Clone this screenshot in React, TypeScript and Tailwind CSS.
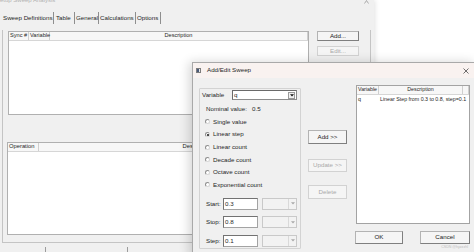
import type { ReactNode } from "react";

function Btn({
  label,
  disabled,
  className,
}: {
  label: string;
  disabled?: boolean;
  className: string;
}) {
  return (
    <div
      className={`flex items-center justify-center border bg-[#f5f5f5] whitespace-nowrap ${
        disabled
          ? "border-[#d2d2d2] text-[#a9a9a9]"
          : "border-[#b3b3b3] border-b-[#7f7f7f] border-r-[#7f7f7f] text-[#222]"
      } ${className}`}
    >
      {label}
    </div>
  );
}

function Arrow({ color }: { color: string }) {
  return (
    <svg width="4" height="3" viewBox="0 0 4 3" aria-hidden="true">
      <path d="M0 0.3h4L2 2.6z" fill={color} />
    </svg>
  );
}

function Combo({ value }: { value: string }) {
  return (
    <div className="flex h-[10px] w-[65px] items-center border border-[#8c8c8c] border-l-[#6a6a6a] border-t-[#6a6a6a] bg-white">
      <span className="flex-1 pl-[1px]">{value}</span>
      <div className="mr-[1px] flex h-[7px] w-[7px] items-center justify-center border border-[#9a9a9a] bg-[#f0f0f0]">
        <Arrow color="#111" />
      </div>
    </div>
  );
}

function Field({ label, value, first }: { label: string; value: string; first?: boolean }) {
  return (
    <div className={`flex h-[12px] items-center pl-[6px] ${first ? "mt-[6.7px]" : "mt-[6.5px]"}`}>
      <span className="w-[17px]">{label}</span>
      <div className="flex h-full w-[35px] items-center border border-[#a3a3a3] border-l-[#727272] border-t-[#727272] bg-white pl-[1px]">
        {value}
      </div>
      <div className="ml-[4px] flex h-full w-[35px] justify-end border border-[#c9c9c9] bg-[#f2f2f2]">
        <div className="flex w-[8px] items-center justify-center border-l border-[#d9d9d9]">
          <Arrow color="#a8a8a8" />
        </div>
      </div>
    </div>
  );
}

function Radio({ label, checked }: { label: string; checked?: boolean }) {
  return (
    <div className="flex h-[12.6px] items-center pl-[5px]">
      <div className="flex h-[5px] w-[5px] items-center justify-center rounded-full border border-[#8d8d8d] border-r-[#d6d6d6] border-b-[#d6d6d6] bg-white">
        {checked && <div className="h-[2px] w-[2px] rounded-full bg-[#111]" />}
      </div>
      <span className="ml-[3px]">{label}</span>
    </div>
  );
}

function HeadCell({ children, className }: { children?: ReactNode; className: string }) {
  return (
    <div className={`flex items-center border-r border-[#cfcfcf] whitespace-nowrap ${className}`}>
      {children}
    </div>
  );
}

function MainWindow() {
  const tabs = [
    { name: "Sweep Definitions", w: "w-[52px] pl-[1px]" },
    { name: "Table", w: "w-[21px] pl-[2px]" },
    { name: "General", w: "w-[24px] pl-[1px]" },
    { name: "Calculations", w: "w-[37px] pl-[1px]" },
    { name: "Options", w: "w-[25px] pl-[1px]" },
  ];

  return (
    <div className="flex h-[252px] w-[374px] flex-col bg-[#f0f0f0] shadow-[1px_0_5px_rgba(0,0,0,0.12)]">
      <div className="flex h-[10px] items-start justify-between overflow-hidden">
        <span className="-ml-[4px] -mt-[3px] text-[6px] whitespace-nowrap text-[#b2b2b2]">
          Setup Sweep Analysis
        </span>
        <svg width="5" height="4" viewBox="0 0 5 4" className="mr-[5px]" aria-hidden="true">
          <path d="M0.5 3.5L2.5 0.5L4.5 3.5" fill="none" stroke="#8f8f8f" strokeWidth="0.7" />
        </svg>
      </div>

      <div className="mt-[2px] flex h-[12px] pl-[2px]">
        {tabs.map((t) => (
          <div
            key={t.name}
            className={`flex h-full items-center border-r border-[#8e8e8e] whitespace-nowrap ${t.w}`}
          >
            {t.name}
          </div>
        ))}
      </div>

      <div className="ml-[2px] mt-[6px] h-[213px] w-[369px] border-x border-b border-[#c4c4c4]">
        <div className="flex items-start pl-[5px] pt-[1px]">
          <div className="flex h-[84px] w-[301px] flex-col border border-[#b0b0b0] bg-white">
            <div className="flex h-[9px] border-b border-[#d6d6d6] bg-[#f7f7f7] text-[5.6px]">
              <HeadCell className="w-[20px] pl-[1px]">Sync #</HeadCell>
              <HeadCell className="w-[21px] pl-[1px]">Variable</HeadCell>
              <HeadCell className="flex-1 justify-center">Description</HeadCell>
            </div>
          </div>
          <div className="ml-[8px] flex w-[42px] flex-col">
            <Btn label="Add..." className="h-[10px]" />
            <Btn label="Edit..." disabled className="mt-[5px] h-[10px]" />
          </div>
        </div>

        <div className="ml-[4px] mt-[27px] flex h-[93px] w-[350px] flex-col border border-[#b0b0b0] bg-white">
          <div className="flex h-[9px] border-b border-[#d6d6d6] bg-[#f7f7f7] text-[5.8px]">
            <HeadCell className="w-[31px] pl-[1px]">Operation</HeadCell>
            <HeadCell className="flex-1 justify-center">Description</HeadCell>
          </div>
        </div>
      </div>

      <div className="ml-[45px] mt-[4px] h-[5px] w-[83px] border-x border-[#9c9c9c]" />
    </div>
  );
}

function Dialog() {
  return (
    <div className="absolute left-[192px] top-[62px] flex h-[196px] w-[284px] flex-col border-l border-t border-[#a9a9a9] bg-[#f0f0f0] shadow-[-3px_0_10px_rgba(0,0,0,0.16)]">
      <div className="flex h-[15px] items-center justify-between bg-[#f9f2f0]">
        <div className="flex items-center">
          <div className="ml-[3px] flex h-[5px] w-[5px] border border-[#7d7d7d] bg-[#e9e9e9]">
            <div className="w-[2px] bg-[#4a5a78]" />
          </div>
          <span className="ml-[6px] whitespace-nowrap">Add/Edit Sweep</span>
        </div>
        <svg width="6" height="6" viewBox="0 0 6 6" className="mr-[7px]" aria-hidden="true">
          <path d="M0.5 0.5L5.5 5.5M5.5 0.5L0.5 5.5" stroke="#333" strokeWidth="0.7" />
        </svg>
      </div>

      <div className="flex flex-1 items-start pl-[6px]">
        <div className="mt-[10px] h-[161px] w-[102px] rounded-[1px] border border-[#d3d3d3]">
          <div className="mt-[1px] flex h-[10px] items-center">
            <span className="w-[32px] pl-[2px]">Variable</span>
            <Combo value="q" />
          </div>
          <div className="mt-[4px] flex h-[10px] items-center pl-[6px]">
            <span className="w-[46px] whitespace-nowrap">Nominal value:</span>
            <span>0.5</span>
          </div>
          <div className="mt-[1.7px]">
            <Radio label="Single value" />
            <Radio label="Linear step" checked />
            <Radio label="Linear count" />
            <Radio label="Decade count" />
            <Radio label="Octave count" />
            <Radio label="Exponential count" />
          </div>
          <Field label="Start:" value="0.3" first />
          <Field label="Stop:" value="0.8" />
          <Field label="Step:" value="0.1" />
        </div>

        <div className="ml-[7px] mt-[52px] flex w-[39px] flex-col">
          <Btn label="Add >>" className="h-[14px]" />
          <Btn label="Update >>" disabled className="mt-[15px] h-[13px]" />
          <Btn label="Delete" disabled className="mt-[13px] h-[14px]" />
        </div>

        <div className="ml-[9px] mt-[7px] flex w-[114px] flex-col">
          <div className="flex h-[139px] flex-col border border-[#a3a3a3] bg-white text-[5.3px]">
            <div className="flex h-[9px] border-b border-[#d6d6d6] bg-[#f7f7f7]">
              <HeadCell className="w-[22px] pl-[1px]">Variable</HeadCell>
              <HeadCell className="flex-1 justify-center">Description</HeadCell>
              <HeadCell className="w-[6px]" />
            </div>
            <div className="mt-[1px] flex h-[8px] items-center whitespace-nowrap">
              <span className="w-[22px] pl-[1px]">q</span>
              <span className="pl-[1px]">Linear Step from 0.3 to 0.8, step=0.1</span>
            </div>
          </div>
          <div className="mt-[7px] flex justify-between">
            <Btn label="OK" className="-ml-[1px] h-[13px] w-[48px]" />
            <Btn label="Cancel" className="h-[13px] w-[50px]" />
          </div>
          <div className="mt-[1.5px] pr-[2px] text-right text-[3.6px] text-[#bdbdbd]">
            CSDN @hyzzzhl
          </div>
        </div>
      </div>
    </div>
  );
}

export default function App() {
  return (
    <div className="relative h-[252px] w-[474px] overflow-hidden bg-white font-['Liberation_Sans',Arial,sans-serif] text-[6.2px] leading-none text-[#262626]">
      <MainWindow />
      <Dialog />
    </div>
  );
}
